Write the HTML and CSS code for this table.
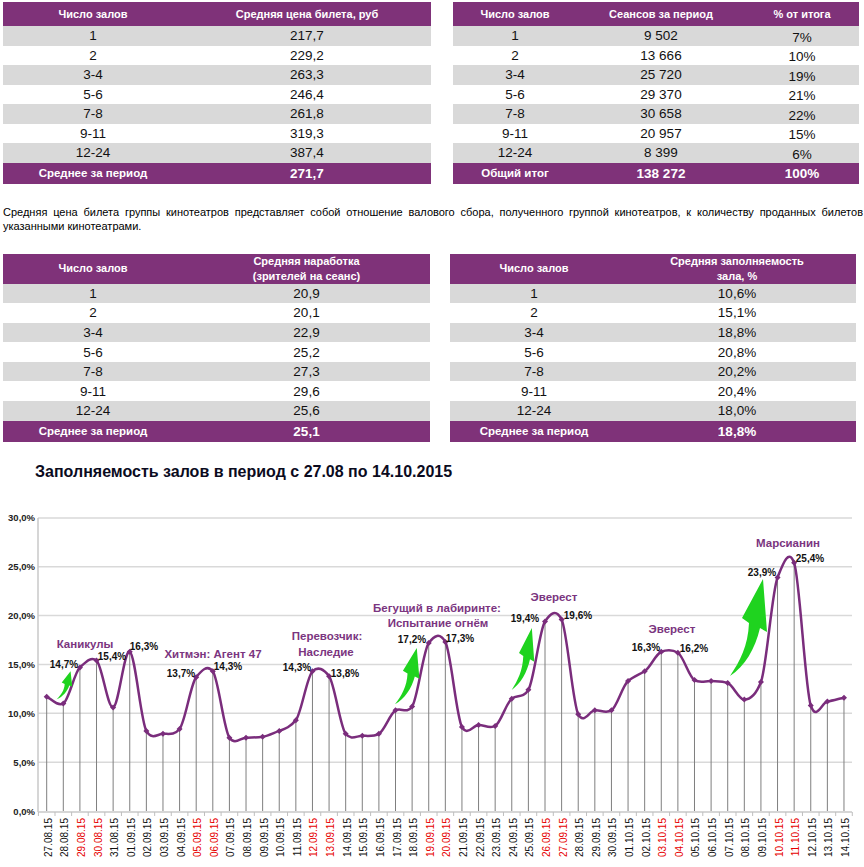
FILE: index.html
```html
<!DOCTYPE html>
<html lang="ru">
<head>
<meta charset="utf-8">
<title>Заполняемость залов</title>
<link rel="stylesheet" href="styles.css">
</head>
<body>
<div class="page">
  <div class="row row-top">
    <table class="tbl tbl-a">
      <colgroup><col class="w180"><col></colgroup>
      <tr class="hd"><th>Число залов</th><th>Средняя цена билета, руб</th></tr>
      <tr class="odd"><td>1</td><td>217,7</td></tr>
      <tr><td>2</td><td>229,2</td></tr>
      <tr class="odd"><td>3-4</td><td>263,3</td></tr>
      <tr><td>5-6</td><td>246,4</td></tr>
      <tr class="odd"><td>7-8</td><td>261,8</td></tr>
      <tr><td>9-11</td><td>319,3</td></tr>
      <tr class="odd"><td>12-24</td><td>387,4</td></tr>
      <tr class="ft"><td class="lbl">Среднее за период</td><td class="val">271,7</td></tr>
    </table>
    <table class="tbl tbl-b">
      <colgroup><col class="w124"><col class="w168"><col></colgroup>
      <tr class="hd"><th>Число залов</th><th>Сеансов за период</th><th>% от итога</th></tr>
      <tr class="odd"><td>1</td><td>9 502</td><td class="pc">7%</td></tr>
      <tr><td>2</td><td>13 666</td><td class="pc">10%</td></tr>
      <tr class="odd"><td>3-4</td><td>25 720</td><td class="pc">19%</td></tr>
      <tr><td>5-6</td><td>29 370</td><td class="pc">21%</td></tr>
      <tr class="odd"><td>7-8</td><td>30 658</td><td class="pc">22%</td></tr>
      <tr><td>9-11</td><td>20 957</td><td class="pc">15%</td></tr>
      <tr class="odd"><td>12-24</td><td>8 399</td><td class="pc">6%</td></tr>
      <tr class="ft"><td class="lbl">Общий итог</td><td class="val">138 272</td><td class="val">100%</td></tr>
    </table>
  </div>

  <p class="note">Средняя цена билета группы кинотеатров представляет собой отношение валового сбора, полученного группой кинотеатров, к количеству проданных билетов указанными кинотеатрами.</p>

  <div class="row row-mid">
    <table class="tbl tbl-c">
      <colgroup><col class="w180"><col></colgroup>
      <tr class="hd"><th>Число залов</th><th>Средняя наработка<br>(зрителей на сеанс)</th></tr>
      <tr class="odd"><td>1</td><td>20,9</td></tr>
      <tr><td>2</td><td>20,1</td></tr>
      <tr class="odd"><td>3-4</td><td>22,9</td></tr>
      <tr><td>5-6</td><td>25,2</td></tr>
      <tr class="odd"><td>7-8</td><td>27,3</td></tr>
      <tr><td>9-11</td><td>29,6</td></tr>
      <tr class="odd"><td>12-24</td><td>25,6</td></tr>
      <tr class="ft"><td class="lbl">Среднее за период</td><td class="val">25,1</td></tr>
    </table>
    <table class="tbl tbl-d">
      <colgroup><col class="w168"><col></colgroup>
      <tr class="hd"><th>Число залов</th><th>Средняя заполняемость<br>зала, %</th></tr>
      <tr class="odd"><td>1</td><td>10,6%</td></tr>
      <tr><td>2</td><td>15,1%</td></tr>
      <tr class="odd"><td>3-4</td><td>18,8%</td></tr>
      <tr><td>5-6</td><td>20,8%</td></tr>
      <tr class="odd"><td>7-8</td><td>20,2%</td></tr>
      <tr><td>9-11</td><td>20,4%</td></tr>
      <tr class="odd"><td>12-24</td><td>18,0%</td></tr>
      <tr class="ft"><td class="lbl">Среднее за период</td><td class="val">18,8%</td></tr>
    </table>
  </div>

  <h2 class="title">Заполняемость залов в период с 27.08 по 14.10.2015</h2>

  <div class="chart">
    <svg id="chart" width="864" height="387" viewBox="0 0 864 387" xmlns="http://www.w3.org/2000/svg"></svg>
  </div>
</div>
<script src="script.js"></script>
</body>
</html>
```

FILE: styles.css
```css
* { box-sizing: border-box; }
html, body { margin: 0; padding: 0; background: #fff; }
body {
  font-family: "Liberation Sans", Arial, sans-serif;
  color: #000;
  width: 864px;
  overflow: hidden;
}
.page { padding: 2px 0 0 3px; }
.row { display: flex; align-items: flex-start; }
.row-top { gap: 22px; }
.row-mid { gap: 20px; margin-top: 21px; }

.tbl { border-collapse: collapse; border-spacing: 0; table-layout: fixed; }
.tbl-a { width: 428px; }
.tbl-b { width: 406px; }
.tbl-c { width: 427px; }
.tbl-d { width: 406px; }
.w180 { width: 180px; }
.w124 { width: 124px; }
.w168 { width: 168px; }

.tbl th, .tbl td { padding: 0; text-align: center; vertical-align: middle; }
.hd th {
  background: #7f3279;
  color: #fff;
  font-weight: bold;
  font-size: 11px;
  height: 24px;
  line-height: 14px;
}
.row-mid .hd th { height: 30px; line-height: 15px; }
.tbl td { font-size: 13.5px; height: 19.5px; line-height: 15px; color: #111; }
.row-mid .tbl td { height: 19.6px; }
.tbl td.pc { padding-top: 3px; }
.odd td { background: #d9d9d9; }
.ft td { background: #7f3279; color: #fff; font-weight: bold; height: 21px; }
.row-mid .ft td { height: 21px; }
.ft td.lbl { font-size: 11.5px; }
.ft td.val { font-size: 13.5px; }

.note {
  margin: 21px 0 0;
  width: 860px;
  font-size: 11px;
  line-height: 14px;
  text-align: justify;
}
.title {
  margin: 21px 0 0 32px;
  font-size: 16px;
  line-height: 18px;
  font-weight: bold;
  color: #0b0b1e;
}
.chart { margin-left: -3px; height: 387px; }
.chart svg { display: block; }

.grid { stroke: #d9d9d9; stroke-width: 1.5; }
.axis { stroke: #c8c8c8; stroke-width: 1.5; }
.tick { stroke: #bfbfbf; stroke-width: 1; }
.drop { stroke: #7f7f7f; stroke-width: 1; }
.curve { fill: none; stroke: #7a2d7c; stroke-width: 2.5; stroke-linejoin: round; }
.mark { fill: #7a2d7c; }
.ylab { font-family: "Liberation Sans", Arial, sans-serif; font-size: 9.5px; font-weight: bold; fill: #222; }
.xlab { font-family: "Liberation Sans", Arial, sans-serif; font-size: 10px; fill: #111; }
.xlab.we { fill: #e60000; }
.ann { font-family: "Liberation Sans", Arial, sans-serif; font-size: 11.5px; font-weight: bold; fill: #7b3580; }
.dlab { font-family: "Liberation Sans", Arial, sans-serif; font-size: 10px; font-weight: bold; fill: #111; }
.arrow { fill: #1fd31f; }
```

FILE: script.js
```js
(function () {
  var NS = 'http://www.w3.org/2000/svg';
  var svg = document.getElementById('chart');
  var OFF = 480;
  var root = document.createElementNS(NS, 'g');
  root.setAttribute('transform', 'translate(0,' + (-OFF) + ')');
  svg.appendChild(root);

  var vals = [11.7, 11.0, 14.7, 15.4, 10.6, 16.3, 8.2, 7.9, 8.4, 13.7, 14.3, 7.5, 7.5, 7.6, 8.2, 9.3,
    14.3, 13.8, 7.9, 7.7, 7.9, 10.3, 10.7, 17.2, 17.3, 8.6, 8.8, 8.7, 11.5, 12.4, 19.4, 19.6, 9.9,
    10.3, 10.3, 13.3, 14.3, 16.3, 16.2, 13.4, 13.3, 13.1, 11.4, 13.2, 23.9, 25.4, 10.8, 11.2, 11.6];

  var X0 = 46.7, DX = 16.61, Y0 = 810, K = 9.77;
  function X(i) { return X0 + i * DX; }
  function Y(v) { return Y0 - v * K; }

  function el(name, attrs, text) {
    var e = document.createElementNS(NS, name);
    for (var k in attrs) e.setAttribute(k, attrs[k]);
    if (text != null) e.textContent = text;
    root.appendChild(e);
    return e;
  }

  // grid + y labels
  for (var g = 5; g <= 30; g += 5) {
    el('line', { x1: 38, x2: 852, y1: Y(g), y2: Y(g), 'class': 'grid' });
  }
  for (g = 0; g <= 30; g += 5) {
    el('text', { x: 35, y: Y(g) + 3.5, 'text-anchor': 'end', 'class': 'ylab' }, g.toFixed(1).replace('.', ',') + '%');
  }
  el('line', { x1: 38, x2: 38, y1: Y(30), y2: Y(0) + 1, 'class': 'axis' });
  el('line', { x1: 38, x2: 852, y1: Y(0) + 1, y2: Y(0) + 1, 'class': 'axis' });
  for (var t = 0; t <= vals.length; t++) {
    var tx = X(t) - DX / 2;
    el('line', { x1: tx, x2: tx, y1: Y(0) + 1, y2: Y(0) + 5, 'class': 'tick' });
  }

  // drop lines
  vals.forEach(function (v, i) {
    el('line', { x1: X(i), x2: X(i), y1: Y(v), y2: Y(0), 'class': 'drop' });
  });

  // smooth curve (Catmull-Rom, softened vertically)
  var pts = vals.map(function (v, i) { return [X(i), Y(v)]; });
  var FX = 6, FY = 8.5;
  var d = 'M' + pts[0][0].toFixed(2) + ',' + pts[0][1].toFixed(2);
  for (var i = 0; i < pts.length - 1; i++) {
    var p0 = pts[i - 1] || pts[i], p1 = pts[i], p2 = pts[i + 1], p3 = pts[i + 2] || pts[i + 1];
    var c1x = p1[0] + (p2[0] - p0[0]) / FX, c1y = p1[1] + (p2[1] - p0[1]) / FY;
    var c2x = p2[0] - (p3[0] - p1[0]) / FX, c2y = p2[1] - (p3[1] - p1[1]) / FY;
    d += ' C' + c1x.toFixed(2) + ',' + c1y.toFixed(2) + ' ' + c2x.toFixed(2) + ',' + c2y.toFixed(2) + ' ' + p2[0].toFixed(2) + ',' + p2[1].toFixed(2);
  }
  el('path', { d: d, 'class': 'curve' });

  // markers
  pts.forEach(function (p) {
    var x = p[0], y = p[1], s = 3;
    el('path', { d: 'M' + x + ',' + (y - s) + ' L' + (x + s) + ',' + y + ' L' + x + ',' + (y + s) + ' L' + (x - s) + ',' + y + ' Z', 'class': 'mark' });
  });

  // arrows
  var arrowPath = 'M0,0 C10,-15 18,-30 19,-53 L12,-58 L33,-97 L37,-44 L30,-48 C25,-27 15,-10 0,0 Z';
  [[56.7, 698.3, 0.42, 0.29], [395, 703.3, 0.66, 0.58], [511.7, 689, 0.61, 0.64], [730, 675, 1, 1]].forEach(function (a) {
    el('path', { d: arrowPath, transform: 'translate(' + a[0] + ',' + a[1] + ') scale(' + a[2] + ',' + a[3] + ')', 'class': 'arrow' });
  });

  // x labels
  for (i = 0; i < vals.length; i++) {
    var dt = new Date(2015, 7, 27 + i);
    var dd = ('0' + dt.getDate()).slice(-2), mm = ('0' + (dt.getMonth() + 1)).slice(-2);
    var we = dt.getDay() === 0 || dt.getDay() === 6;
    var bx = X(i) + 5, by = 817;
    el('text', { x: bx, y: by, 'text-anchor': 'end', transform: 'rotate(-90 ' + bx + ' ' + by + ')', 'class': we ? 'xlab we' : 'xlab' }, dd + '.' + mm + '.15');
  }

  // annotations
  [['Каникулы', 85, 643], ['Хитмэн: Агент 47', 213, 653], ['Перевозчик:', 327, 635], ['Наследие', 326, 651],
   ['Бегущий в лабиринте:', 437, 607], ['Испытание огнём', 438, 622], ['Эверест', 554, 596],
   ['Эверест', 672, 628], ['Марсианин', 788, 542]].forEach(function (a) {
    el('text', { x: a[1], y: a[2] + 4, 'text-anchor': 'middle', 'class': 'ann' }, a[0]);
  });

  // data labels
  [['14,7%', 64, 663], ['15,4%', 112, 655], ['16,3%', 144, 645], ['13,7%', 181, 672], ['14,3%', 228, 665],
   ['14,3%', 297, 666], ['13,8%', 345, 672], ['17,2%', 412, 638], ['17,3%', 460, 637], ['19,4%', 525, 617],
   ['19,6%', 578, 614], ['16,3%', 646, 646], ['16,2%', 694, 647], ['23,9%', 762, 571], ['25,4%', 810, 557]].forEach(function (a) {
    el('text', { x: a[1], y: a[2] + 3.5, 'text-anchor': 'middle', 'class': 'dlab' }, a[0]);
  });
})();
```
